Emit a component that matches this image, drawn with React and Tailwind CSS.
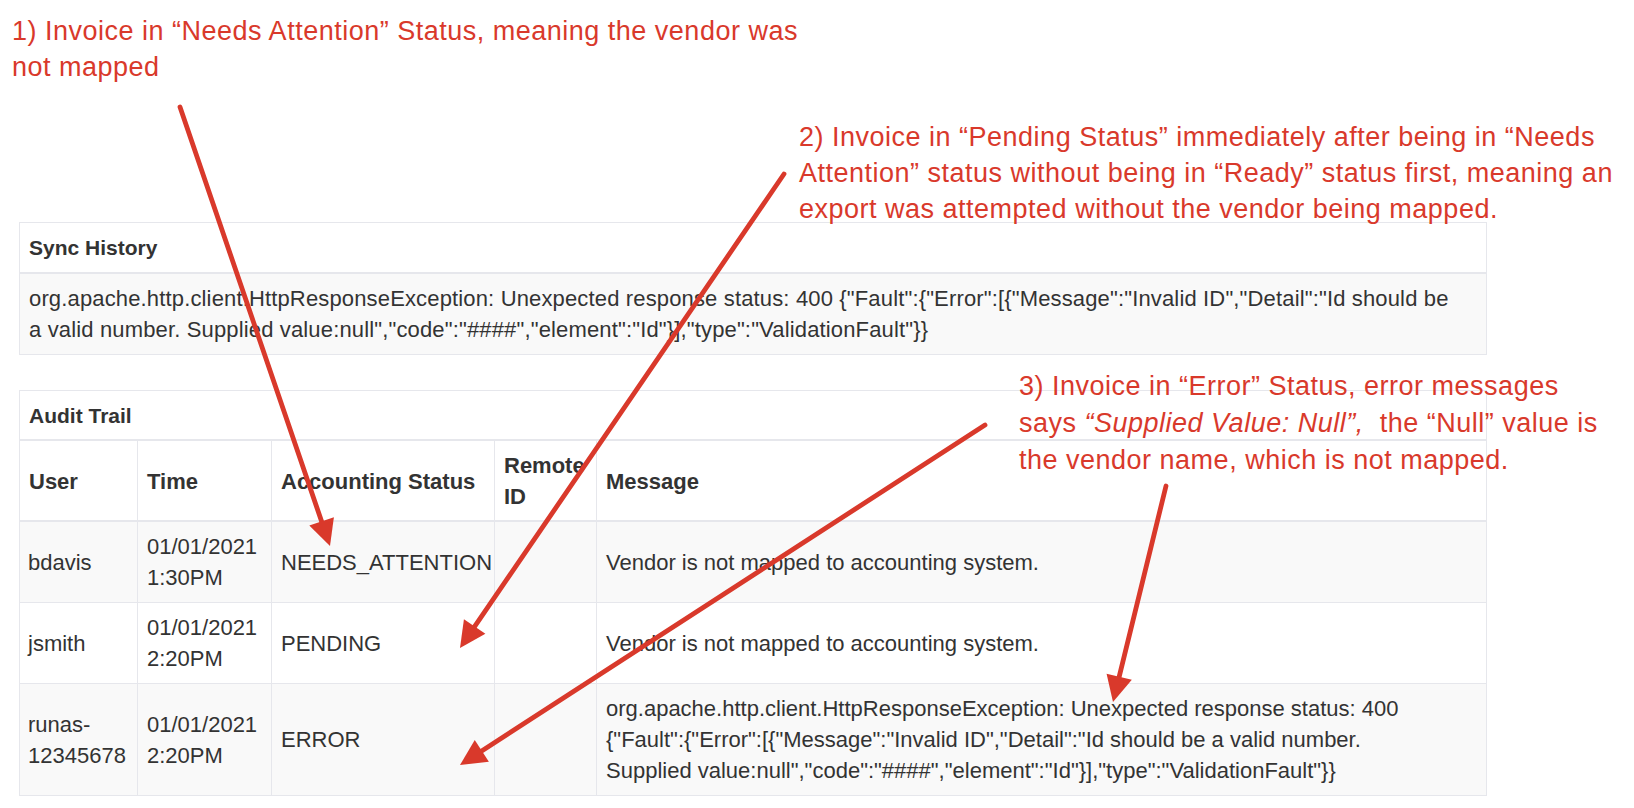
import React from "react";

const RED = "#d9392b";

function arrowParts(sx, sy, tx, ty, L = 26, W = 13) {
  const dx = tx - sx;
  const dy = ty - sy;
  const len = Math.hypot(dx, dy);
  const ux = dx / len;
  const uy = dy / len;
  const bx = tx - ux * L;
  const by = ty - uy * L;
  const nx = -uy;
  const ny = ux;
  return {
    line: { x1: sx, y1: sy, x2: bx + ux * 2, y2: by + uy * 2 },
    head: `${tx},${ty} ${bx + nx * W},${by + ny * W} ${bx - nx * W},${by - ny * W}`,
  };
}

const arrows = [
  [180, 107, 330, 546],
  [784, 174, 460, 648],
  [985, 425, 460, 765],
  [1166, 486, 1113, 702],
];

function Arrows() {
  return (
    <svg
      className="absolute left-0 top-0 pointer-events-none"
      width="1634"
      height="808"
      viewBox="0 0 1634 808"
    >
      {arrows.map(([a, b, c, d], i) => {
        const p = arrowParts(a, b, c, d);
        return (
          <g key={i}>
            <line {...p.line} stroke={RED} strokeWidth="4.8" strokeLinecap="round" />
            <polygon points={p.head} fill={RED} />
          </g>
        );
      })}
    </svg>
  );
}

const note =
  "font-['Liberation_Sans',Arial,sans-serif] text-[27px] tracking-[0.5px] text-[#d9392b] whitespace-nowrap";

const cols = "grid grid-cols-[117px_134px_223px_102px_890px]";
const cell = "flex items-center px-[9px] border-l border-[#e6e7ec]";

const rows = [
  {
    user: "bdavis",
    time: ["01/01/2021", "1:30PM"],
    status: "NEEDS_ATTENTION",
    msg: ["Vendor is not mapped to accounting system."],
    bg: "bg-[#f9f9f9]",
  },
  {
    user: "jsmith",
    time: ["01/01/2021", "2:20PM"],
    status: "PENDING",
    msg: ["Vendor is not mapped to accounting system."],
    bg: "bg-white",
  },
  {
    user: "runas-\n12345678",
    time: ["01/01/2021", "2:20PM"],
    status: "ERROR",
    msg: [
      "org.apache.http.client.HttpResponseException: Unexpected response status: 400",
      '{"Fault":{"Error":[{"Message":"Invalid ID","Detail":"Id should be a valid number.',
      'Supplied value:null","code":"####","element":"Id"}],"type":"ValidationFault"}}',
    ],
    bg: "bg-[#f9f9f9]",
  },
];

function Lines({ items }) {
  return (
    <div>
      {items.map((t, i) => (
        <div key={i} className="whitespace-nowrap">
          {t}
        </div>
      ))}
    </div>
  );
}

export default function App() {
  return (
    <div className="relative w-[1634px] h-[808px] overflow-hidden bg-white font-['Liberation_Sans',Arial,sans-serif] text-[#333333]">
      {/* top annotations area */}
      <div className="h-[222px]">
        <div className={`${note} pl-[12px] pt-[13px] leading-[36px]`}>
          <div>1) Invoice in “Needs Attention” Status, meaning the vendor was</div>
          <div>not mapped</div>
        </div>
        <div className={`${note} ml-[799px] mt-[34px] leading-[36px]`}>
          <div>2) Invoice in “Pending Status” immediately after being in “Needs</div>
          <div>Attention” status without being in “Ready” status first, meaning an</div>
          <div>export was attempted without the vendor being mapped.</div>
        </div>
      </div>

      {/* Sync History */}
      <div className="ml-[19px] w-[1468px] border border-[#e6e7ec]">
        <div className="px-[9px] pt-[9px] pb-[9px] leading-[31px] text-[21px] font-bold border-b-2 border-[#e6e7ec]">
          Sync History
        </div>
        <div className="bg-[#f9f9f9] px-[9px] py-[9px] leading-[31px] text-[22px] tracking-[0.15px]">
          <div className="whitespace-nowrap">
            org.apache.http.client.HttpResponseException: Unexpected response status: 400 {'{"Fault":{"Error":[{"Message":"Invalid ID","Detail":"Id should be'}
          </div>
          <div className="whitespace-nowrap">
            {'a valid number. Supplied value:null","code":"####","element":"Id"}],"type":"ValidationFault"}}'}
          </div>
        </div>
      </div>

      {/* Audit Trail */}
      <div className="ml-[19px] mt-[35px] w-[1468px] border border-[#e6e7ec]">
        <div className="px-[9px] pt-[9px] pb-[8px] leading-[31px] text-[21px] font-bold border-b-2 border-[#e6e7ec]">
          Audit Trail
        </div>
        <div className={`${cols} border-b-2 border-[#e6e7ec] text-[22px] font-bold leading-[31px]`}>
          <div className="flex items-center px-[9px] pt-[9px] pb-[8px] -ml-px">
            <span className="pl-px">User</span>
          </div>
          <div className={`${cell} pt-[9px] pb-[8px]`}>Time</div>
          <div className={`${cell} pt-[9px] pb-[8px]`}>Accounting Status</div>
          <div className={`${cell} pt-[9px] pb-[8px] items-start`}>
            <div>
              Remote
              <br />
              ID
            </div>
          </div>
          <div className={`${cell} pt-[9px] pb-[8px]`}>Message</div>
        </div>
        {rows.map((r, i) => (
          <div
            key={i}
            className={`${cols} ${r.bg} text-[22px] leading-[31px] ${
              i < rows.length - 1 ? "border-b border-[#e6e7ec]" : ""
            }`}
          >
            <div className="flex items-center px-[8px] py-[9px] whitespace-pre-line">
              {r.user}
            </div>
            <div className={`${cell} py-[9px]`}>
              <Lines items={r.time} />
            </div>
            <div className={`${cell} py-[9px]`}>{r.status}</div>
            <div className={`${cell} py-[9px]`}></div>
            <div className={`${cell} py-[9px]`}>
              <Lines items={r.msg} />
            </div>
          </div>
        ))}
      </div>

      {/* Annotation 3 (over the table) */}
      <div className={`${note} absolute left-[1019px] top-[368px] leading-[37px]`}>
        <div>3) Invoice in “Error” Status, error messages</div>
        <div>
          says <span className="italic">“Supplied Value: Null”,</span>&nbsp; the “Null” value is
        </div>
        <div>the vendor name, which is not mapped.</div>
      </div>

      <Arrows />
    </div>
  );
}
